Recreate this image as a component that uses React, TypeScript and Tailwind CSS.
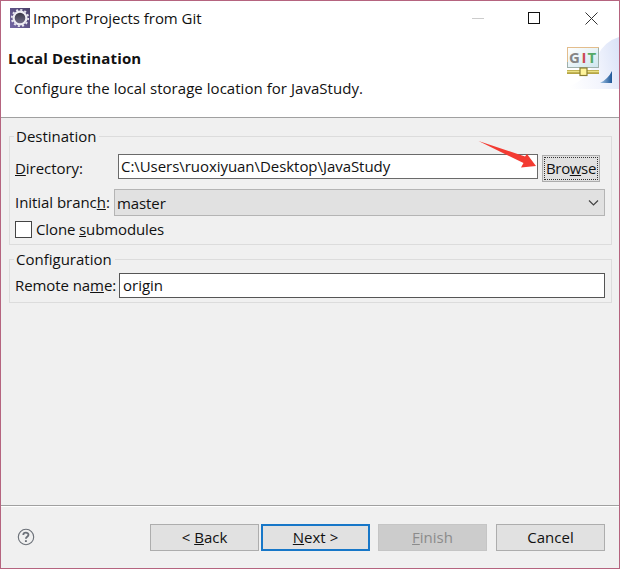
import React from 'react';

const App: React.FC = () => (
  <div className="flex h-[569px] w-[620px] flex-col border border-[#b5647f] bg-[#f0f0f0] font-['Open_Sans','Noto_Sans',sans-serif] text-[15px] leading-5 whitespace-pre text-[#111]">
    <Header />

    <main className="flex h-[387px] flex-col gap-[14px] px-2 pt-[18px]">
      {/* DESTINATION */}
      <Group title="Destination" titleWidth="w-[85px]" className="h-[109px]">
        <div className="flex h-[30px] items-center pt-[3px] pl-[5px]">
          <span className="mt-[2px] w-[103px] tracking-[-0.05px]"><u>D</u>irectory:</span>
          <div className="flex h-[25px] w-[420px] items-center border border-[#6a6a6a] bg-white pb-[2px] pl-[2px] tracking-[-0.05px]">
            C:\Users\ruoxiyuan\Desktop\JavaStudy
          </div>
          <button className="mt-[3px] ml-1 flex h-[27px] w-[58px] items-center justify-center border border-[#adadad] bg-[#e1e1e1] p-px tracking-[-0.35px]">
            <span className="flex h-full w-full items-center justify-center border border-dotted border-[#333]">
              <span>Bro<u>w</u>se</span>
            </span>
          </button>
        </div>
        <div className="mt-[9px] flex h-[27px] items-center pl-[5px]">
          <span className="mb-px w-[99px] tracking-[-0.05px]">Initial branc<u>h</u>:</span>
          <div className="flex h-[27px] w-[491px] items-center justify-between border border-[#b4b4b4] bg-[#e1e1e1] pr-[5px] pl-[2px] tracking-[-0.1px]">
            <span>master</span>
            <svg width="11" height="8" viewBox="0 0 11 8" fill="none" stroke="#444" strokeWidth="1.2">
              <path d="M1 1.5 5.5 6 10 1.5" />
            </svg>
          </div>
        </div>
        <div className="mt-[3px] flex h-[20px] items-center pl-[5px]">
          <span className="mr-1 h-[17px] w-[17px] border border-[#444] bg-white" />
          <span className="tracking-[-0.12px]">Clone <u>s</u>ubmodules</span>
        </div>
      </Group>

      {/* CONFIGURATION */}
      <Group title="Configuration" titleWidth="w-[101px]" className="h-[44px]">
        <div className="flex h-[25px] items-center pl-[5px]">
          <span className="mb-[2px] w-[104px] tracking-[-0.08px]">Remote na<u>m</u>e:</span>
          <div className="flex h-[25px] w-[486px] items-center border border-[#555] bg-white pb-[2px] pl-[3px]">origin</div>
        </div>
      </Group>
    </main>

    <footer className="flex flex-1 items-start border-t border-[#a0a0a0] pt-[18px] shadow-[inset_0_1px_0_#fff]">
      <HelpIcon />
      <div className="ml-[115px] flex">
        <Button className="border-[#adadad] bg-[#e1e1e1]">{'< '}<u>B</u>ack</Button>
        <Button className="ml-[2px] border-2 border-[#1777c8] bg-[#e1e1e1]"><u>N</u>ext {'>'}</Button>
        <Button className="ml-2 border-[#c5c5c5] bg-[#cccccc] text-[#8b8b8b]"><u>F</u>inish</Button>
        <Button className="ml-[9px] border-[#adadad] bg-[#e1e1e1]">Cancel</Button>
      </div>
    </footer>

    <Arrow />
  </div>
);

// --- Subcomponents ---

const Header = () => (
  <header className="flex h-[117px] shrink-0 flex-col border-b border-[#a0a0a0] bg-white">
    <div className="flex h-[34px] items-center pl-2">
      <EclipseIcon />
      <span className="ml-[3px] tracking-[-0.05px]">Import Projects from Git</span>
      <svg className="ml-auto" width="148" height="34" viewBox="0 0 148 34" fill="none" shapeRendering="crispEdges">
        <path d="M1 17.5h12" stroke="#ccc" />
        <rect x="57.5" y="11.5" width="11" height="11" stroke="#111" />
        <path d="m114.5 11.500 12 12m0-12-12 12" stroke="#333" shapeRendering="auto" />
      </svg>
    </div>
    <div className="flex flex-1">
      <div className="pt-[13px] pl-[7px]">
        <h1 className="font-bold tracking-[0.16px]">Local Destination</h1>
        <p className="mt-[10px] pl-[6px] tracking-[0.04px]">Configure the local storage location for JavaStudy.</p>
      </div>
      <GitBanner />
    </div>
  </header>
);

interface GroupProps {
  title: string;
  titleWidth: string;
  className: string;
  children: React.ReactNode;
}

const Group = ({ title, titleWidth, className, children }: GroupProps) => (
  <section className={`w-[603px] border border-[#dcdcdc] ${className}`}>
    <h2 className={`-mt-[11px] ml-1 h-[24px] bg-[#f0f0f0] pl-[2px] ${titleWidth}`}>{title}</h2>
    {children}
  </section>
);

const Button = ({ children, className }: { children: React.ReactNode; className: string }) => (
  <button className={`flex h-[27px] w-[109px] items-center justify-center border ${className}`}>
    <span className="-mt-px">{children}</span>
  </button>
);

const HelpIcon = () => (
  <svg className="mt-[4px] ml-4" width="18" height="18" viewBox="0 0 18 18" fill="none" stroke="#6b7078">
    <circle cx="9" cy="9" r="7.7" strokeWidth="1.1" />
    <path d="M6.300 6.900C6.300 3.900 11.500 3.900 11.500 6.800c0 2-2.600 2-2.600 4" strokeWidth="1.800" />
    <path d="M8.900 12.200v1.800" strokeWidth="1.900" />
  </svg>
);

const EclipseIcon = () => (
  <svg className="ml-px" width="20" height="20" viewBox="0 0 20 20">
    <defs>
      <linearGradient id="tile" x1="1" y1="0" x2="0" y2="1">
        <stop offset="0" stopColor="#4a4068" />
        <stop offset="1" stopColor="#7467a6" />
      </linearGradient>
      <linearGradient id="moon" x1="0" x2="0" y1="0" y2="1">
        <stop offset="0" stopColor="#34323f" />
        <stop offset="1" stopColor="#77718f" />
      </linearGradient>
    </defs>
    <rect width="20" height="20" fill="url(#tile)" />
    <circle cx="10" cy="10" r="8.200" fill="none" stroke="#e8e6ee" strokeWidth="1.800" strokeDasharray="2.150 2.143" />
    <circle cx="10" cy="10" r="6.400" fill="url(#moon)" stroke="#efedf4" strokeWidth="2.200" />
  </svg>
);

const GitBanner = () => (
  <svg className="mt-px ml-auto" width="64" height="60" viewBox="0 0 64 60">
    <defs>
      <linearGradient id="sweep" x1="0" x2="1" y1="0.200" y2="0">
        <stop offset="0" stopColor="#fff" />
        <stop offset="0.500" stopColor="#f3f5fd" />
        <stop offset="1" stopColor="#d9e2f7" />
      </linearGradient>
      <linearGradient id="card" x1="0" x2="1" y1="0" y2="1">
        <stop offset="0" stopColor="#fff" />
        <stop offset="1" stopColor="#cfe6ee" />
      </linearGradient>
      <linearGradient id="corner" x1="0" x2="1">
        <stop offset="0" stopColor="#a4c6e6" />
        <stop offset="1" stopColor="#1d5698" />
      </linearGradient>
    </defs>
    <path d="M6 53Q34 46 42 20 50 5 64 1V53Z" fill="url(#sweep)" />
    <rect x="12.500" y="11.500" width="31" height="20" fill="url(#card)" stroke="#9fb0ac" />
    <path d="M12 11.500h32M12.500 11v15" stroke="#e3bd8c" />
    <g fontFamily="Open Sans" fontSize="15" fontWeight="700">
      <text x="14" y="27" fill="#858585">G</text>
      <text x="26.500" y="27" fill="#cb4b55">I</text>
      <text x="32.500" y="27" fill="#56a968">T</text>
    </g>
    <path d="M12 36h32" stroke="#b5a545" strokeWidth="4" />
    <path d="M12 35.500h32" stroke="#ebe184" strokeWidth="1.500" />
    <rect x="25" y="32" width="7" height="7.500" fill="#fff49c" stroke="#897d32" strokeWidth="1.200" />
    <path d="M57 35v12H45Q53 43 57 35" fill="url(#corner)" />
  </svg>
);

const Arrow = () => (
  <svg className="absolute top-[136px] left-[474px]" width="66" height="36" viewBox="0 0 66 36">
    <path d="M4.500 5 51 20.500 53 18 62 30 47 31.500 49.500 27Z" fill="#f33b32" />
  </svg>
);

export default App;
